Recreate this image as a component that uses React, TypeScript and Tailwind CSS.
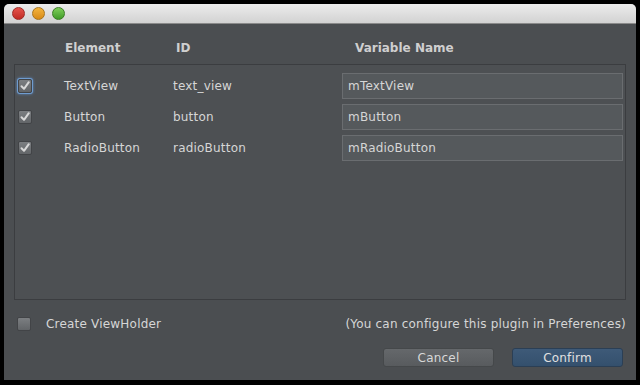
import React from 'react';

const rows = [
  { element: 'TextView', id: 'text_view', name: 'mTextView', focused: true },
  { element: 'Button', id: 'button', name: 'mButton', focused: false },
  { element: 'RadioButton', id: 'radioButton', name: 'mRadioButton', focused: false },
];

function CheckBox({ checked, focused }: { checked: boolean; focused?: boolean }) {
  return (
    <div
      className={`w-[14px] h-[14px] rounded-[2px] flex items-center justify-center bg-gradient-to-b from-[#7c7f82] to-[#626568] border border-[#424447] ${
        focused ? 'ring-1 ring-[#6f9ccf] shadow-[0_0_3px_1px_#5d8ac0]' : ''
      }`}
    >
      {checked && (
        <svg width="12" height="12" viewBox="0 0 12 12">
          <path d="M2.5 6.2 L5 8.8 L9.8 2.2" fill="none" stroke="#d8d8d8" strokeWidth="2" strokeLinecap="round" strokeLinejoin="round" />
        </svg>
      )}
    </div>
  );
}

export default function App() {
  return (
    <div className="w-[640px] h-[385px] bg-black p-[4px] pb-[5px]" style={{ fontFamily: '"DejaVu Sans", "Liberation Sans", sans-serif' }}>
      <div className="w-full h-full flex flex-col rounded-t-[5px] overflow-hidden bg-[#4b4e51]">
        {/* title bar */}
        <div className="h-[20px] shrink-0 flex items-center gap-[7px] pl-[8px] bg-gradient-to-b from-[#ececec] to-[#d2d2d2] border-b border-[#8a8a8a]">
          <span className="w-[13px] h-[13px] rounded-full bg-gradient-to-b from-[#e5534c] to-[#c02a23] border border-[#9e2b26]" />
          <span className="w-[13px] h-[13px] rounded-full bg-gradient-to-b from-[#f3b43d] to-[#d88a14] border border-[#a8741c]" />
          <span className="w-[13px] h-[13px] rounded-full bg-gradient-to-b from-[#7fcf5b] to-[#3f9c27] border border-[#3a7d24]" />
        </div>

        <div className="flex-1 flex flex-col px-[10px] text-[12px] tracking-[0.2px] text-[#d6d6d6]">
          {/* header */}
          <div className="h-[40px] pt-[7px] flex items-center font-bold text-[#cfcfcf] tracking-normal">
            <span className="w-[162px] shrink-0 pl-[51px]">Element</span>
            <span className="w-[179px] shrink-0">ID</span>
            <span>Variable Name</span>
          </div>

          {/* table */}
          <div className="h-[236px] border border-[#3b3d40] bg-[#4d5053] pt-[8px] flex flex-col gap-[5px] pr-[2px]">
            {rows.map((r) => (
              <div key={r.element} className="h-[26px] flex items-center">
                <div className="w-[49px] pl-[3px] shrink-0">
                  <CheckBox checked focused={r.focused} />
                </div>
                <span className="w-[109px] shrink-0">{r.element}</span>
                <span className="w-[169px] shrink-0">{r.id}</span>
                <div className="flex-1 h-[26px] flex items-center px-[5px] bg-[#55595c] border border-[#6a6d70]">
                  {r.name}
                </div>
              </div>
            ))}
          </div>

          {/* footer */}
          <div className="h-[48px] flex items-center justify-between pl-[3px]">
            <div className="flex items-center gap-[15px]">
              <CheckBox checked={false} />
              <span>Create ViewHolder</span>
            </div>
            <span>(You can configure this plugin in Preferences)</span>
          </div>

          <div className="flex justify-end gap-[18px] pr-[3px]">
            <button className="w-[111px] h-[19px] rounded-[3px] bg-gradient-to-b from-[#65686b] to-[#585b5e] border border-[#45484a] text-[#d8d8d8]">
              Cancel
            </button>
            <button className="w-[111px] h-[19px] rounded-[3px] bg-gradient-to-b from-[#3e5a78] to-[#34506d] border border-[#2b3f55] text-[#e0e0e0]">
              Confirm
            </button>
          </div>
        </div>
      </div>
    </div>
  );
}
